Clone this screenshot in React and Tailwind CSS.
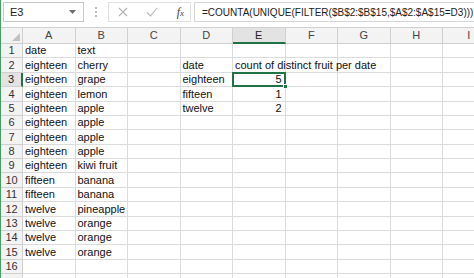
const COLS = ["A", "B", "C", "D", "E", "F", "G", "H", "I"];

// cell contents by row number, keyed by column letter
const DATA = {
  1: { A: "date", B: "text" },
  2: { A: "eighteen", B: "cherry", D: "date", E: "count of distinct fruit per date" },
  3: { A: "eighteen", B: "grape", D: "eighteen", E: 5 },
  4: { A: "eighteen", B: "lemon", D: "fifteen", E: 1 },
  5: { A: "eighteen", B: "apple", D: "twelve", E: 2 },
  6: { A: "eighteen", B: "apple" },
  7: { A: "eighteen", B: "apple" },
  8: { A: "eighteen", B: "apple" },
  9: { A: "eighteen", B: "kiwi fruit" },
  10: { A: "fifteen", B: "banana" },
  11: { A: "fifteen", B: "banana" },
  12: { A: "twelve", B: "pineapple" },
  13: { A: "twelve", B: "orange" },
  14: { A: "twelve", B: "orange" },
  15: { A: "twelve", B: "orange" },
  16: {},
  17: {},
};

const font = { fontFamily: '"Liberation Sans", Arial, sans-serif' };

function FormulaBar() {
  return (
    <div className="flex items-center h-[27px] bg-white pt-[2px] pb-[5px] gap-0">
      {/* name box */}
      <div className="ml-[2px] w-[81px] h-[20px] border border-[#c8c8c8] flex items-center justify-between pl-[6px] pr-[7px] text-[11px] text-[#222]">
        <span>E3</span>
        <svg width="7" height="4" viewBox="0 0 7 4">
          <path d="M0 0 L7 0 L3.5 4 Z" fill="#6b6b6b" />
        </svg>
      </div>
      {/* grip dots */}
      <div className="w-[24px] flex flex-col items-center gap-[2px]">
        <span className="w-[2px] h-[2px] bg-[#bdbdbd]" />
        <span className="w-[2px] h-[2px] bg-[#bdbdbd]" />
        <span className="w-[2px] h-[2px] bg-[#bdbdbd]" />
      </div>
      {/* cancel / enter / fx */}
      <div className="w-[83px] h-[20px] border border-[#e2e2e2] flex items-center justify-between pl-[9px] pr-[6px]">
        <svg width="10" height="10" viewBox="0 0 10 10">
          <path d="M1 1 L9 9 M9 1 L1 9" stroke="#b5b5b5" strokeWidth="1.1" />
        </svg>
        <svg width="12" height="10" viewBox="0 0 12 10">
          <path d="M1 5.5 L4.5 9 L11 1" stroke="#b5b5b5" strokeWidth="1.1" fill="none" />
        </svg>
        <span className="italic text-[12px] text-[#444] leading-none" style={{ fontFamily: '"Liberation Serif", serif' }}>
          f<span className="text-[9px]">x</span>
        </span>
      </div>
      {/* formula input */}
      <div className="ml-[3px] flex-1 min-w-0 h-[20px] border border-[#d6d6d6] border-r-0 flex items-center pl-[7px] text-[10px] text-[#222] whitespace-nowrap overflow-hidden">
        =COUNTA(UNIQUE(FILTER($B$2:$B$15,$A$2:$A$15=D3)))
      </div>
    </div>
  );
}

function Grid() {
  const rows = Object.keys(DATA).map(Number);
  return (
    <div className="grid grid-cols-[22px_repeat(9,52.5px)] grid-rows-[17px_repeat(17,14.375px)] text-[11px]">
      {/* corner */}
      <div className="bg-[#f3f3f3] border-r border-b border-t border-[#d0d0d0] flex items-end justify-end pr-[2px] pb-[2px]">
        <svg width="8" height="8" viewBox="0 0 8 8">
          <path d="M8 0 L8 8 L0 8 Z" fill="#c2c2c2" />
        </svg>
      </div>
      {COLS.map((c) => (
        <div
          key={c}
          className={
            c === "E"
              ? "bg-[#e3e3e3] border-r border-t border-[#d0d0d0] border-b-2 border-b-[#217346] flex items-center justify-center text-[#222]"
              : "bg-[#f3f3f3] border-r border-t border-b border-[#d0d0d0] flex items-center justify-center text-[#444]"
          }
        >
          {c}
        </div>
      ))}
      {rows.map((r) => (
        <Row key={r} n={r} cells={DATA[r]} />
      ))}
    </div>
  );
}

function Row({ n, cells }) {
  return (
    <>
      <div
        className={
          n === 3
            ? "bg-[#e3e3e3] border-b border-[#d0d0d0] border-r-2 border-r-[#217346] flex items-center justify-center text-[#222]"
            : "bg-[#f3f3f3] border-r border-b border-[#d0d0d0] flex items-center justify-center text-[#333]"
        }
      >
        {n < 17 ? n : null}
      </div>
      {COLS.map((c) => {
        const v = cells[c];
        const isNum = typeof v === "number";
        const selected = n === 3 && c === "E";
        return (
          <div
            key={c}
            className={
              "relative border-r border-b border-[#dcdcdc] flex items-center whitespace-nowrap text-[#111] overflow-visible " +
              (isNum ? "justify-end pr-[3px]" : "pl-[2px]")
            }
          >
            <span className="relative z-10">{v}</span>
            {selected && (
              <>
                <div className="absolute -left-[1px] -top-[1px] -right-[1px] -bottom-[1px] border-2 border-[#217346] z-20" />
                <div className="absolute -right-[3px] -bottom-[3px] w-[5px] h-[5px] bg-[#217346] border border-white z-30" />
              </>
            )}
          </div>
        );
      })}
    </>
  );
}

export default function App() {
  return (
    <div className="w-[474px] h-[278px] overflow-hidden bg-white border-l border-[#4f9a68]" style={font}>
      <FormulaBar />
      <Grid />
    </div>
  );
}
